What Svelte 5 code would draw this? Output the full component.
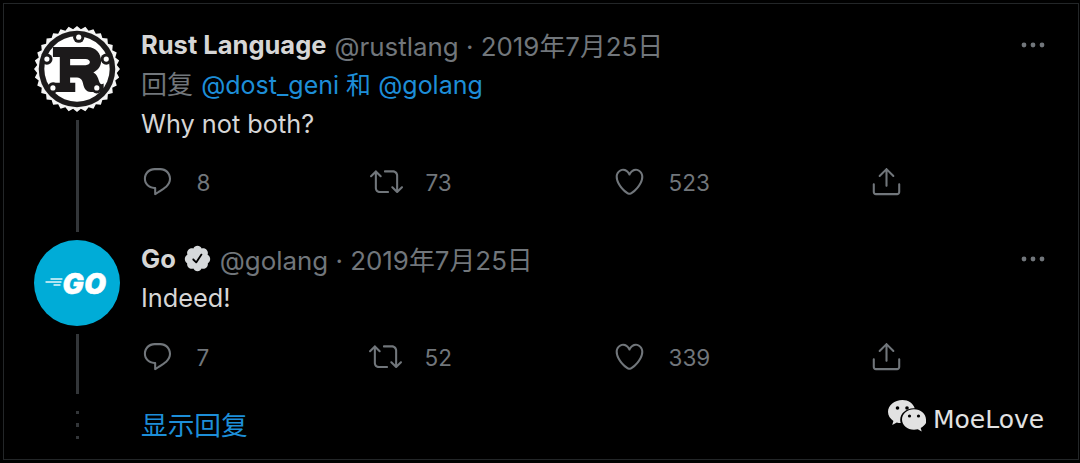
<script>
  const icons = {
    reply: ["M14.046 2.242l-4.148-.01h-.002c-4.374 0-7.8 3.427-7.8 7.802 0 4.098 3.186 7.206 7.465 7.37v3.828c0 .108.044.286.12.403.142.225.384.347.632.347.138 0 .277-.038.402-.118.264-.168 6.473-4.14 8.088-5.506 1.902-1.61 3.04-3.97 3.043-6.312v-.017c-.006-4.367-3.43-7.787-7.8-7.788zm3.787 12.972c-1.134.96-4.862 3.405-6.772 4.643V16.67c0-.414-.335-.75-.75-.75h-.396c-3.66 0-6.318-2.476-6.318-5.886 0-3.534 2.768-6.302 6.3-6.302l4.147.01h.002c3.532 0 6.3 2.766 6.302 6.296-.003 1.91-.942 3.844-2.514 5.176z"],
    retweet: ["M23.77 15.67c-.292-.293-.767-.293-1.06 0l-2.22 2.22V7.65c0-2.068-1.683-3.75-3.75-3.75h-5.85c-.414 0-.75.336-.75.75s.336.75.75.75h5.85c1.24 0 2.25 1.01 2.25 2.25v10.24l-2.22-2.22c-.293-.293-.768-.293-1.06 0s-.294.768 0 1.06l3.5 3.5c.145.147.337.22.53.22s.383-.072.53-.22l3.5-3.5c.294-.292.294-.767 0-1.06zm-10.66 3.28H7.26c-1.24 0-2.25-1.01-2.25-2.25V6.46l2.22 2.22c.148.147.34.22.532.22s.384-.073.53-.22c.293-.293.293-.768 0-1.06l-3.5-3.5c-.293-.294-.768-.294-1.06 0l-3.5 3.5c-.294.292-.294.767 0 1.06s.767.293 1.06 0l2.22-2.22V16.7c0 2.068 1.683 3.75 3.75 3.75h5.85c.414 0 .75-.336.75-.75s-.337-.75-.75-.75z"],
    heart: ["M12 21.638h-.014C9.403 21.59 1.95 14.856 1.95 8.478c0-3.064 2.525-5.754 5.403-5.754 2.29 0 3.83 1.58 4.646 2.73.814-1.148 2.354-2.73 4.645-2.73 2.88 0 5.404 2.69 5.404 5.755 0 6.376-7.454 13.11-10.037 13.157H12zM7.354 4.225c-2.08 0-3.903 1.988-3.903 4.255 0 5.74 7.034 11.596 8.55 11.658 1.518-.062 8.55-5.917 8.55-11.658 0-2.267-1.823-4.255-3.903-4.255-2.528 0-3.94 2.936-3.952 2.965-.23.562-1.156.562-1.387 0-.014-.03-1.425-2.965-3.954-2.965z"],
    share: ["M17.53 7.47l-5-5c-.293-.293-.768-.293-1.06 0l-5 5c-.294.293-.294.768 0 1.06s.767.294 1.06 0l3.72-3.72V15c0 .414.336.75.75.75s.75-.336.75-.75V4.81l3.72 3.72c.146.147.338.22.53.22s.384-.072.53-.22c.293-.293.293-.767 0-1.06z", "M19.708 21.944H4.292C3.028 21.944 2 20.916 2 19.652V14c0-.414.336-.75.75-.75s.75.336.75.75v5.652c0 .437.355.792.792.792h15.416c.437 0 .792-.355.792-.792V14c0-.414.336-.75.75-.75s.75.336.75.75v5.652c0 1.264-1.028 2.292-2.292 2.292z"]
  };
  const badge = "M22.5 12.5c0-1.58-.875-2.95-2.148-3.6.154-.435.238-.905.238-1.4 0-2.21-1.71-3.998-3.818-3.998-.47 0-.92.084-1.336.25C14.818 2.415 13.51 1.5 12 1.5s-2.816.917-3.437 2.25c-.415-.165-.866-.25-1.336-.25-2.11 0-3.818 1.79-3.818 4 0 .494.083.964.237 1.4-1.272.65-2.147 2.018-2.147 3.6 0 1.495.782 2.798 1.942 3.486-.02.17-.032.34-.032.514 0 2.21 1.708 4 3.818 4 .47 0 .92-.086 1.335-.25.62 1.334 1.926 2.25 3.437 2.25 1.512 0 2.818-.916 3.437-2.25.415.163.865.248 1.336.248 2.11 0 3.818-1.79 3.818-4 0-.174-.012-.344-.033-.513 1.158-.687 1.943-1.99 1.943-3.484zm-6.616-3.334l-4.334 6.5c-.145.217-.382.334-.625.334-.143 0-.288-.04-.416-.126l-.115-.094-2.415-2.415c-.293-.293-.293-.768 0-1.06s.768-.294 1.06 0l1.77 1.767 3.825-5.74c.23-.345.696-.436 1.04-.207.346.23.44.696.21 1.04z";
  const star = Array.from({ length: 64 }, (_, i) => {
    const r = i % 2 ? 46.5 : 50;
    const a = (i * Math.PI) / 32;
    return `${(50 + r * Math.sin(a)).toFixed(2)},${(50 - r * Math.cos(a)).toFixed(2)}`;
  }).join(" ");
  const bolts = [[52, 13], [15, 38.5], [84, 38.5], [22, 72], [73, 72]];
  const row1 = [["reply", "8"], ["retweet", "73"], ["heart", "523"], ["share", ""]];
  const row2 = [["reply", "7"], ["retweet", "52"], ["heart", "339"], ["share", ""]];
</script>

{#snippet actions(items)}
  <div class="actions">
    {#each items as [name, count]}
      <div class="action">
        <svg class="icon" viewBox="0 0 24 24" fill="currentColor">
          {#each icons[name] as d}<path {d} />{/each}
        </svg>
        {#if count}<span>{count}</span>{/if}
      </div>
    {/each}
  </div>
{/snippet}

{#snippet more()}
  <svg class="more" viewBox="0 0 24 6" fill="currentColor">
    <circle cx="3" cy="3" r="2.4" /><circle cx="12" cy="3" r="2.4" /><circle cx="21" cy="3" r="2.4" />
  </svg>
{/snippet}

<div class="card">
  <article class="tweet first">
    <div class="rail">
      <svg class="avatar" viewBox="0 0 100 100">
        <polygon points={star} fill="#f4f4f4" />
        <circle cx="50" cy="50" r="44.500" fill="#1c1a1b" />
        <circle cx="50" cy="50" r="38" fill="#fff" />
        <path fill="#1c1a1b" d="M22 24.400 H62 C72 24.400 78 32 78 41 C78 48 73 52 69 54 C73 56 74 59 76 65 C77 68 78 68 81 67 V76.700 H66 C60 76.700 58 72 57 67 C56 62 54 60 48 60 H42 V66 H48 V76.700 H22 V66 H30 V36 H22 Z" />
        <path fill="#fff" d="M42 38.400 H60 C63 38.400 65 40 65 42 C65 44 63 45.500 60 45.500 H42 Z" />
        {#each bolts as [x, y]}
          <circle cx={x} cy={y} r="6.500" fill="#1c1a1b" />
          <circle cx={x} cy={y} r="3" fill="#fff" />
        {/each}
      </svg>
      <div class="line"></div>
    </div>
    <div class="main">
      <div class="head">
        <div class="meta">
          <strong>Rust Language</strong>
          <span class="gray date">@rustlang · 2019年7月25日</span>
        </div>
        {@render more()}
      </div>
      <div class="text"><span class="gray cjk">回复</span> <span class="blue mention">@dost_geni 和 @golang</span></div>
      <div class="text">Why not both?</div>
      {@render actions(row1)}
    </div>
  </article>

  <article class="tweet second">
    <div class="rail">
      <svg class="avatar" viewBox="0 0 86 86">
        <circle cx="43" cy="43" r="43" fill="#00acd7" />
        <g stroke="#fff" stroke-width="1.300" stroke-linecap="round" opacity=".9">
          <path d="M17 39 H28" /><path d="M12 42 H27" /><path d="M20 45 H26" />
        </g>
        <text x="28.500" y="53.500" class="gologo">GO</text>
      </svg>
      <div class="line"></div>
    </div>
    <div class="main">
      <div class="head">
        <div class="meta">
          <strong>Go</strong>
          <svg class="badge" viewBox="0 0 24 24" fill="#d6d9db"><path d={badge} /></svg>
          <span class="gray date">@golang · 2019年7月25日</span>
        </div>
        {@render more()}
      </div>
      <div class="text">Indeed!</div>
      {@render actions(row2)}
    </div>
  </article>

  <div class="showrow">
    <div class="dots"><i></i><i></i><i></i></div>
    <span class="blue show">显示回复</span>
  </div>

  <div class="mark">
    <svg class="wechat" viewBox="0 0 38 33" fill="#e2e2e2">
      <path d="M14.5 0C6.5 0 0 5.3 0 11.8c0 3.7 2.1 7 5.4 9.1L4.2 25l4.6-2.6c1.2.3 2.6.5 3.9.6-.3-1-.5-2.1-.5-3.2 0-6.4 6-11.6 13.4-11.6h1.1C25.300 3.400 20.300 0 14.500 0z" />
      <path d="M38 19.500c0-5.600-5.400-10.200-12-10.200s-12 4.600-12 10.200 5.400 10.200 12 10.200c1.300 0 2.600-.2 3.800-.5l3.900 2.300-1-3.500c3.300-1.900 6.300-5 6.300-8.500z" />
      <g fill="#000">
        <circle cx="9.500" cy="8" r="1.800" /><circle cx="19" cy="8" r="1.800" />
        <circle cx="21.500" cy="16" r="1.600" /><circle cx="30.500" cy="16" r="1.600" />
      </g>
    </svg>
    <span>MoeLove</span>
  </div>
</div>

<style>
  :global(body) { background: #000; }
  .card {
    position: relative;
    box-sizing: border-box;
    height: 457px;
    margin: 3px 1px 3px 3px;
    padding: 22px 33px 0 30px;
    border: 1px solid #232628;
    color: #d6d6d6;
    font-family: Inter, "Noto Sans CJK SC", sans-serif;
    font-size: 25.300px;
  }
  .tweet { display: flex; gap: 21px; }
  .first { height: 214px; }
  .second { height: 160px; }
  .rail { display: flex; flex-direction: column; align-items: center; width: 86px; flex: none; }
  .avatar { width: 86px; height: 86px; flex: none; display: block; }
  .line { width: 3px; flex: 1; margin: 8px 0; background: #333639; }
  .second .line { margin-bottom: 6px; }
  .main { flex: 1; min-width: 0; }
  .head { display: flex; justify-content: space-between; align-items: center; height: 37px; margin-bottom: 2px; }
  .meta { display: flex; align-items: center; gap: 8px; white-space: nowrap; }
  strong { font-weight: 700; font-size: 25.500px; }
  .date { font-size: 25.900px; }
  .cjk { font-size: 26px; }
  .mention { font-size: 25px; margin-left: 1px; }
  .gray { color: #71767b; }
  .blue { color: #1d8ed8; }
  .text { line-height: 39px; height: 39px; }
  .more { width: 24px; height: 6px; color: #71767b; }
  .badge { width: 29px; height: 29px; margin-left: -1px; }
  .second .text { margin-top: -1px; }
  .second .actions { margin-top: 19px; grid-template-columns: 228px 244px 257px auto; }
  .actions { display: grid; grid-template-columns: 229px 243px 257px auto; margin-top: 18px; height: 40px; }
  .action { display: flex; align-items: center; gap: 22.500px; color: #71767b; font-size: 22.500px; }
  .action span { margin-top: 2px; }
  .icon { width: 33px; height: 33px; flex: none; }
  .gologo { font: italic 900 28px Inter, sans-serif; letter-spacing: .5px; fill: #fff; stroke: #fff; stroke-width: .6px; }
  .showrow { display: flex; gap: 21px; height: 50px; align-items: center; }
  .dots { width: 86px; display: flex; flex-direction: column; align-items: center; gap: 9px; }
  .dots i { width: 3px; height: 3.500px; background: #333639; display: block; }
  .show { font-size: 26.700px; margin-top: -4px; }
  .mark { position: absolute; left: 884px; top: 395px; display: flex; align-items: center; gap: 7px; color: #e2e2e2; font: 25px "DejaVu Sans", sans-serif; }
  .mark span { margin-top: 6px; }
  .wechat { width: 38px; height: 33px; }
</style>
